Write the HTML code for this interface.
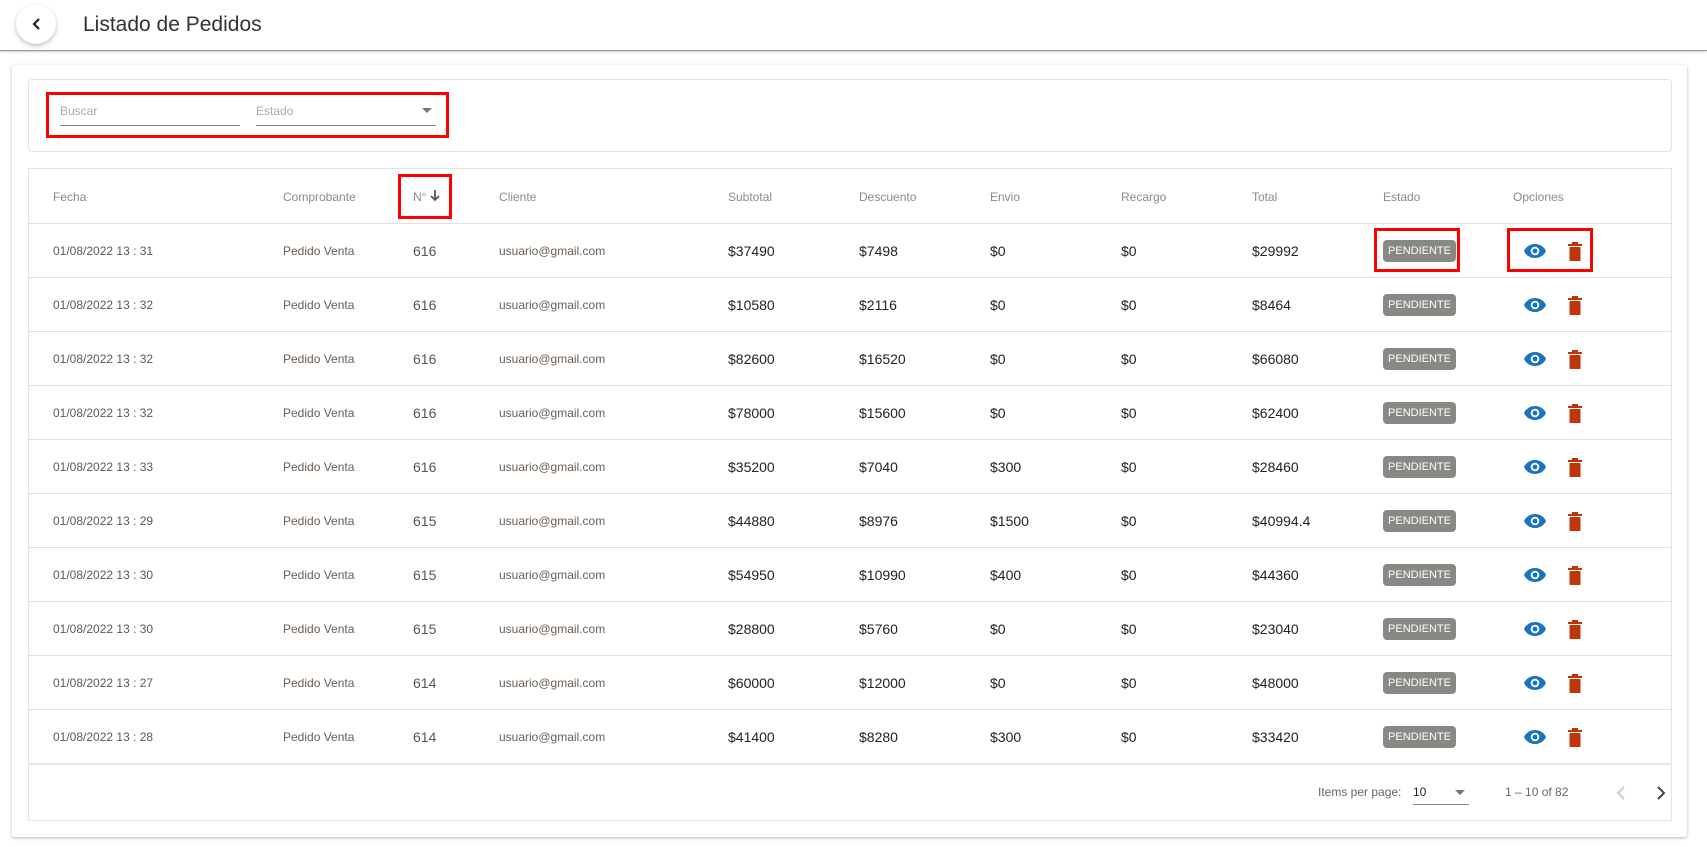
<!DOCTYPE html>
<html><head><meta charset="utf-8"><style>
*{box-sizing:border-box;margin:0;padding:0}
body{width:1707px;height:847px;background:#fff;font-family:"Liberation Sans",sans-serif;position:relative;overflow:hidden;color:#333}
.hdr{position:absolute;left:0;top:0;width:1707px;height:51px;border-bottom:1px solid #9a9a9a;box-shadow:0 1px 2px rgba(0,0,0,.2)}
.back{position:absolute;left:16px;top:4px;width:40px;height:40px;border-radius:50%;background:#fff;box-shadow:0 2px 4px rgba(0,0,0,.25)}
.title{position:absolute;left:83px;top:13px;font-size:21px;color:#333}
.card{position:absolute;left:12px;top:65px;width:1675px;height:772px;background:#fff;box-shadow:0 1px 3px rgba(0,0,0,.3);border-radius:2px}
.filt{position:absolute;left:28px;top:79px;width:1644px;height:73px;border:1px solid #e3e3e3;border-radius:4px}
.red{position:absolute;border:3px solid #f00}
.inp{position:absolute;border-bottom:1px solid #8a8a8a;font-size:12px;color:#aaa;height:22px}
.tbl{position:absolute;left:28px;top:168px;width:1644px;height:653px;border:1px solid #e3e3e3}
.row{position:absolute;left:0;width:1642px;height:54px;border-bottom:1px solid #e0e0e0}
.c{position:absolute;top:1px;line-height:53px;white-space:nowrap}
.h .c{font-size:12px;color:#8a8a8a;line-height:55px}
.d{font-size:12px;color:#5a5a5a}
.m{font-size:14px;color:#222}
.badge{position:absolute;top:16px;height:22px;width:73px;background:#8a8884;color:#fff;font-size:11px;line-height:22px;text-align:center;border-radius:4px}
.pag{position:absolute;left:0;top:594px;width:1642px;height:58px;border-top:2px solid #e6e6e6;font-size:12px;color:#666}
</style></head><body>
<div class="hdr"><div class="back"><svg width="40" height="40" viewBox="0 0 40 40"><path d="M23 15l-5 5 5 5" stroke="#222" stroke-width="2.2" fill="none"/></svg></div><div class="title">Listado de Pedidos</div></div>
<div class="card"></div>
<div class="filt">
<div class="inp" style="left:31px;top:24px;width:180px">Buscar</div>
<div class="inp" style="left:227px;top:24px;width:180px">Estado<svg style="position:absolute;right:4px;top:4px" width="10" height="6"><path d="M0 0h10L5 5z" fill="#777"/></svg></div>
</div>
<div class="red" style="left:46px;top:92px;width:403px;height:46px"></div>
<div class="tbl">
<div class="row h" style="top:0;height:55px">
<div class="c" style="left:24px">Fecha</div><div class="c" style="left:254px">Comprobante</div><div class="c" style="left:384px">N° <svg width="10" height="12" viewBox="0 0 10 12" style="vertical-align:-1px"><path d="M5 0v10M1 6l4 4 4-4" stroke="#555" stroke-width="1.8" fill="none"/></svg></div><div class="c" style="left:470px">Cliente</div><div class="c" style="left:699px">Subtotal</div><div class="c" style="left:830px">Descuento</div><div class="c" style="left:961px">Envio</div><div class="c" style="left:1092px">Recargo</div><div class="c" style="left:1223px">Total</div><div class="c" style="left:1354px">Estado</div><div class="c" style="left:1484px">Opciones</div>
</div>
ROWS
<div class="pag">
<div style="position:absolute;left:1289px;top:20px">Items per page:</div>
<div style="position:absolute;left:1384px;top:20px;width:56px;height:20px;border-bottom:1px solid #888;color:#222">10<svg style="position:absolute;right:4px;top:5px" width="10" height="6"><path d="M0 0h10L5 5z" fill="#777"/></svg></div>
<div style="position:absolute;left:1476px;top:20px">1 – 10 of 82</div>
<svg style="position:absolute;left:1582px;top:18px" width="20" height="20"><path d="M13 4l-6 6 6 6" stroke="#ccc" stroke-width="2" fill="none"/></svg>
<svg style="position:absolute;left:1622px;top:18px" width="20" height="20"><path d="M7 4l6 6-6 6" stroke="#444" stroke-width="2" fill="none"/></svg>
</div>
</div>
<div class="red" style="left:398px;top:174px;width:54px;height:45px"></div>
<div class="red" style="left:1374px;top:228px;width:86px;height:44px"></div>
<div class="red" style="left:1507px;top:228px;width:86px;height:44px"></div>
<script>
var data=[["01/08/2022 13 : 31","616","$37490","$7498","$0","$29992"],["01/08/2022 13 : 32","616","$10580","$2116","$0","$8464"],["01/08/2022 13 : 32","616","$82600","$16520","$0","$66080"],["01/08/2022 13 : 32","616","$78000","$15600","$0","$62400"],["01/08/2022 13 : 33","616","$35200","$7040","$300","$28460"],["01/08/2022 13 : 29","615","$44880","$8976","$1500","$40994.4"],["01/08/2022 13 : 30","615","$54950","$10990","$400","$44360"],["01/08/2022 13 : 30","615","$28800","$5760","$0","$23040"],["01/08/2022 13 : 27","614","$60000","$12000","$0","$48000"],["01/08/2022 13 : 28","614","$41400","$8280","$300","$33420"]];
var h="";data.forEach(function(r,i){h+='<div class="row" style="top:'+(55+i*54)+'px"><div class="c d" style="left:24px">'+r[0]+'</div><div class="c d" style="left:254px;color:#6b5d52">Pedido Venta</div><div class="c m" style="left:384px;color:#555">'+r[1]+'</div><div class="c d" style="left:470px;color:#6b5d52">usuario@gmail.com</div><div class="c m" style="left:699px">'+r[2]+'</div><div class="c m" style="left:830px">'+r[3]+'</div><div class="c m" style="left:961px">'+r[4]+'</div><div class="c m" style="left:1092px">$0</div><div class="c m" style="left:1223px">'+r[5]+'</div><div class="badge" style="left:1354px">PENDIENTE</div><svg style="position:absolute;left:1494px;top:17px" width="24" height="20" viewBox="0 0 24 20"><path d="M12 3C6.5 3 2.5 6.5 1 10c1.5 3.5 5.5 7 11 7s9.5-3.5 11-7c-1.5-3.5-5.5-7-11-7z" fill="#1a73c0"/><circle cx="12" cy="10" r="4.3" fill="#fff"/><circle cx="12" cy="10" r="2.4" fill="#1a73c0"/></svg><svg style="position:absolute;left:1538px;top:16px" width="16" height="22" viewBox="0 0 16 22"><path d="M1 4h14v2H1zM5 2h6v2H5zM2.5 7h11v14h-11z" fill="#c0360c"/></svg></div>';});
document.querySelector(".tbl").innerHTML=document.querySelector(".tbl").innerHTML.replace("ROWS",h);
</script>
</body></html>
